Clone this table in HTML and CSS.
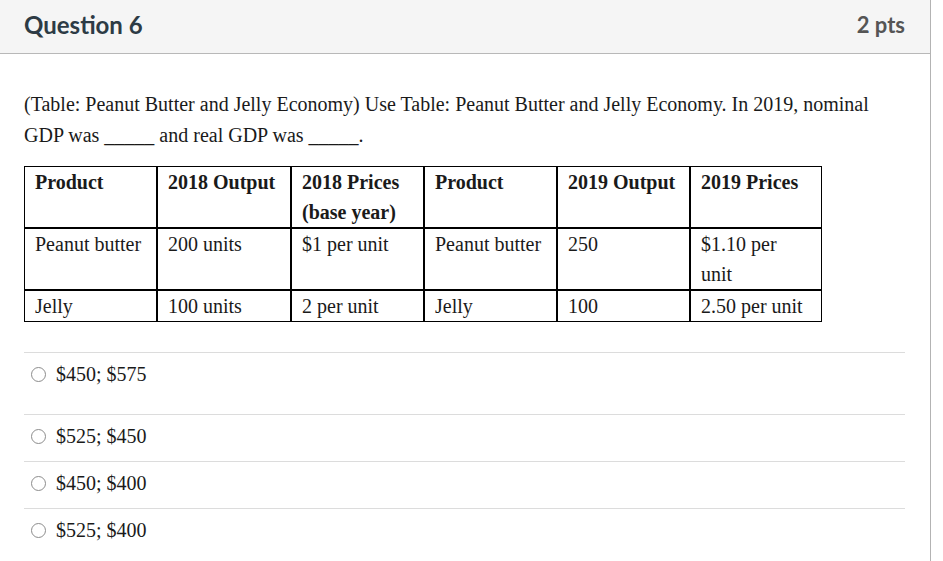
FILE: index.html
```html
<!DOCTYPE html>
<html>
<head>
<meta charset="utf-8">
<link rel="stylesheet" href="styles.css">
</head>
<body>
<div class="question">
  <div class="q-header">
    <h2 class="q-title">Question 6</h2>
    <span class="q-points">2 pts</span>
  </div>
  <div class="q-body">
    <p class="q-text">(Table: Peanut Butter and Jelly Economy) Use Table: Peanut Butter and Jelly Economy. In 2019, nominal GDP was _____ and real GDP was _____.</p>
    <table class="data">
      <colgroup>
        <col class="c1"><col class="c2"><col class="c3"><col class="c4"><col class="c5"><col class="c6">
      </colgroup>
      <tr>
        <th>Product</th>
        <th>2018 Output</th>
        <th>2018 Prices (base year)</th>
        <th>Product</th>
        <th>2019 Output</th>
        <th>2019 Prices</th>
      </tr>
      <tr>
        <td>Peanut butter</td>
        <td>200 units</td>
        <td>$1 per unit</td>
        <td>Peanut butter</td>
        <td>250</td>
        <td>$1.10 per unit</td>
      </tr>
      <tr>
        <td>Jelly</td>
        <td>100 units</td>
        <td>2 per unit</td>
        <td>Jelly</td>
        <td>100</td>
        <td>2.50 per unit</td>
      </tr>
    </table>
    <div class="answers">
      <label class="answer first"><span class="radio"></span><span class="a-text">$450; $575</span></label>
      <label class="answer"><span class="radio"></span><span class="a-text">$525; $450</span></label>
      <label class="answer"><span class="radio"></span><span class="a-text">$450; $400</span></label>
      <label class="answer"><span class="radio"></span><span class="a-text">$525; $400</span></label>
    </div>
  </div>
</div>
</body>
</html>
```
FILE: styles.css
```css
html, body {
  margin: 0;
  padding: 0;
  background: #fff;
}
.question {
  width: 930px;
  min-height: 561px;
  border-right: 1px solid #b3b3b3;
  box-sizing: content-box;
}
.q-header {
  height: 53px;
  background: #f5f5f5;
  border-bottom: 1px solid #b8b8b8;
  display: flex;
  align-items: center;
  justify-content: space-between;
  padding: 0 25px 0 24px;
}
.q-title {
  margin: 0;
  font-family: Lato, "Open Sans", sans-serif;
  font-weight: 700;
  font-size: 24px;
  color: #2d3b45;
  padding-bottom: 4px;
}
.q-points {
  font-family: Lato, "Open Sans", sans-serif;
  font-weight: 700;
  font-size: 22px;
  color: #555;
  padding-bottom: 4px;
}
.q-body {
  padding: 0 25px 0 24px;
  font-family: "Liberation Serif", "Times New Roman", serif;
  font-size: 20px;
  color: #1a1a1a;
}
.q-text {
  margin: 35px 0 15px 0;
  line-height: 31px;
}
.data {
  border-collapse: separate;
  border-spacing: 0;
  table-layout: fixed;
  width: 798px;
  font-family: "Liberation Serif", "Times New Roman", serif;
  font-size: 20px;
  color: #1a1a1a;
}
.c1 { width: 133px; }
.c2 { width: 134px; }
.c3 { width: 133px; }
.c4 { width: 133px; }
.c5 { width: 133px; }
.c6 { width: 132px; }
.data th, .data td {
  border: 1px solid #000;
  padding: 0 8px 0 10px;
  line-height: 30px;
  text-align: left;
  vertical-align: top;
}
.data td:last-child {
  padding-right: 14px;
}
.data th {
  font-weight: 700;
}
.answers {
  margin-top: 30px;
}
.answer {
  display: flex;
  align-items: center;
  border-top: 1px solid #dcdcdc;
  padding: 10px 0 14px 7px;
}
.answer.first {
  padding-bottom: 29px;
}
.radio {
  width: 13px;
  height: 13px;
  border: 1px solid #8c8c8c;
  border-radius: 50%;
  margin-right: 10px;
  flex: none;
}
.a-text {
  line-height: 22px;
}
```
